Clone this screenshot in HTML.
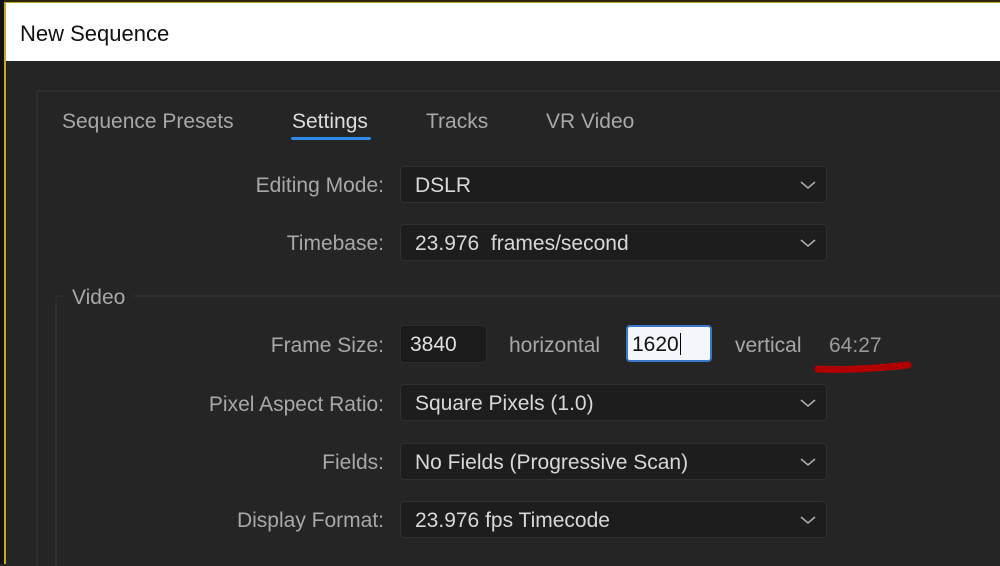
<!DOCTYPE html>
<html><head><style>
body{margin:0;width:1000px;height:564px;overflow:hidden;background:#252525;font-family:"Liberation Sans",sans-serif;position:relative}
.a{position:absolute}
.t{color:#a8a8a8;font-size:21px;white-space:nowrap}
.lab{position:absolute;right:616px;color:#a8a8a8;font-size:21px;white-space:nowrap}
.dd{position:absolute;left:400px;width:425px;height:35px;background:#1d1d1d;border:1px solid #303030;border-radius:4px;color:#d8d8d8;font-size:21px;line-height:37px;box-sizing:content-box}
.dd span{position:absolute;left:14px}
.dd svg{position:absolute;right:10px;top:13px}
</style></head><body>
<div class="a" style="left:0;top:0;width:1000px;height:3px;background:#2a2410"></div>
<div class="a" style="left:0;top:0;width:4px;height:564px;background:#111"></div>
<div class="a" style="left:4px;top:2px;width:2px;height:562px;background:#c8a820"></div>
<div class="a" style="left:6px;top:2px;width:994px;height:1px;background:#c8a820"></div>
<div class="a" style="left:6px;top:3px;width:994px;height:58px;background:#fff"></div>
<div class="a" style="left:20px;top:21px;font-size:22px;color:#111">New Sequence</div>
<div class="a" style="left:36px;top:90px;width:964px;height:474px;border-left:2px solid #2d2d2d;border-top:2px solid #2d2d2d"></div>
<div class="a t" style="left:62px;top:110px;">Sequence Presets</div>
<div class="a t" style="left:292px;top:110px;color:#dcdcdc">Settings</div>
<div class="a" style="left:291px;top:137px;width:80px;height:3px;background:#2d8ceb;border-radius:2px"></div>
<div class="a t" style="left:426px;top:110px;">Tracks</div>
<div class="a t" style="left:546px;top:110px;">VR Video</div>
<div class="lab" style="top:174px">Editing Mode:</div>
<div class="dd" style="top:166px"><span>DSLR</span><svg width="16" height="10"><path d="M1 2l7 6 7-6" stroke="#aaa" stroke-width="1.6" fill="none"/></svg></div>
<div class="lab" style="top:232px">Timebase:</div>
<div class="dd" style="top:224px"><span>23.976&nbsp; frames/second</span><svg width="16" height="10"><path d="M1 2l7 6 7-6" stroke="#aaa" stroke-width="1.6" fill="none"/></svg></div>
<div class="a" style="left:55px;top:295px;width:945px;height:269px;border-left:2px solid #2d2d2d;border-top:2px solid #2d2d2d;border-top-left-radius:4px"></div>
<div class="a" style="left:64px;top:286px;padding:0 8px;background:#252525;color:#a8a8a8;font-size:21px">Video</div>
<div class="lab" style="top:334px">Frame Size:</div>
<div class="a" style="left:400px;top:325px;width:85px;height:36px;background:#1b1b1b;border:1px solid #2c2c2c;border-radius:4px;color:#e0e0e0;font-size:21px;line-height:38px;text-indent:9px">3840</div>
<div class="a t" style="left:509px;top:334px">horizontal</div>
<div class="a" style="left:626px;top:325px;width:82px;height:33px;background:#f4f7fb;border:2px solid #3b78c8;border-radius:4px;color:#111;font-size:21px;line-height:36px;text-indent:4px">1620<span style="display:inline-block;width:1px;height:22px;background:#000;vertical-align:-4px;margin-left:1px"></span></div>
<div class="a t" style="left:735px;top:334px">vertical</div>
<div class="a t" style="left:829px;top:334px;color:#9a9a9a">64:27</div>
<svg class="a" style="left:812px;top:358px" width="104" height="18"><path d="M6 11 Q40 13 96 7" stroke="#b00000" stroke-width="7" fill="none" stroke-linecap="round"/></svg>
<div class="lab" style="top:393px">Pixel Aspect Ratio:</div>
<div class="dd" style="top:384px"><span>Square Pixels (1.0)</span><svg width="16" height="10"><path d="M1 2l7 6 7-6" stroke="#aaa" stroke-width="1.6" fill="none"/></svg></div>
<div class="lab" style="top:451px">Fields:</div>
<div class="dd" style="top:443px"><span>No Fields (Progressive Scan)</span><svg width="16" height="10"><path d="M1 2l7 6 7-6" stroke="#aaa" stroke-width="1.6" fill="none"/></svg></div>
<div class="lab" style="top:509px">Display Format:</div>
<div class="dd" style="top:501px"><span>23.976 fps Timecode</span><svg width="16" height="10"><path d="M1 2l7 6 7-6" stroke="#aaa" stroke-width="1.6" fill="none"/></svg></div>
</body></html>
